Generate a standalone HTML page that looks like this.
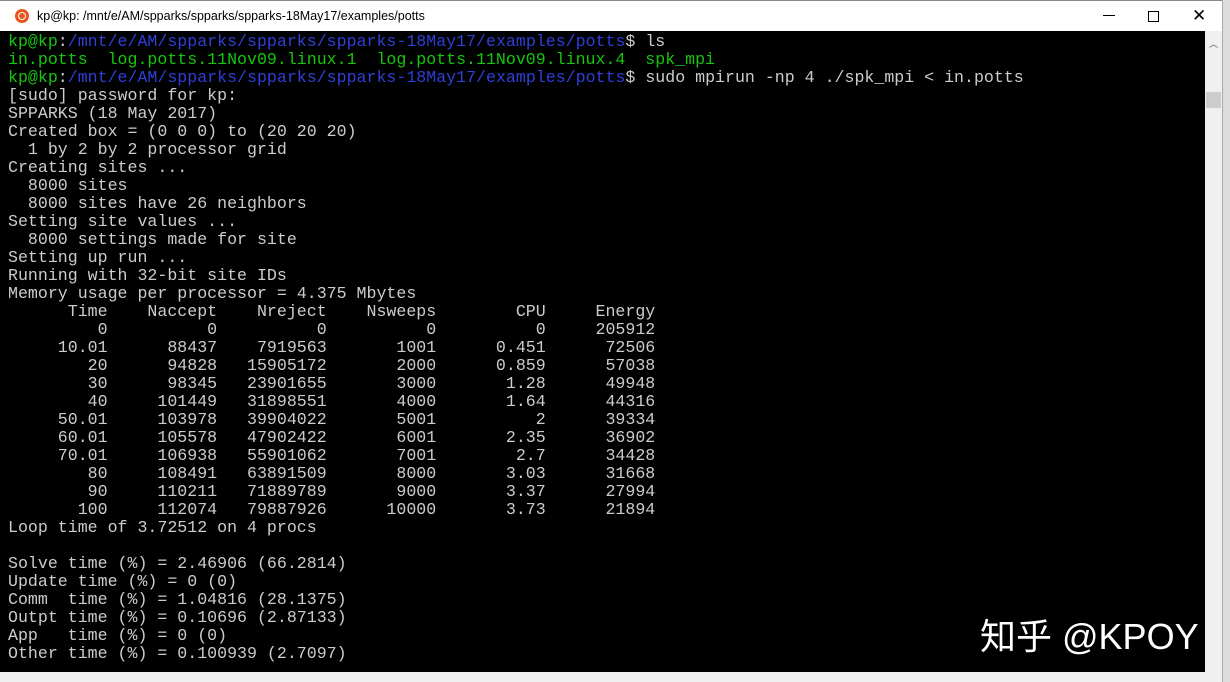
<!DOCTYPE html>
<html><head><meta charset="utf-8"><style>
body{margin:0;width:1230px;height:682px;overflow:hidden;background:#f0f0f0;position:relative;font-family:"Liberation Sans",sans-serif}
#title{position:absolute;left:0;top:0;width:1222px;height:31px;background:#fff;border-top:1px solid #888;box-sizing:border-box}
#title .t{position:absolute;left:37px;top:8px;font-size:12.5px;color:#000}
#title .ic{position:absolute;left:15px;top:8px;width:14px;height:14px;border-radius:50%;background:#e95420}
#title .ic:after{content:"";position:absolute;left:3px;top:3px;width:6px;height:6px;border:1px solid #fff;border-radius:50%}
.min{position:absolute;left:1103px;top:14px;width:12px;height:1px;background:#000}
.max{position:absolute;left:1148px;top:10px;width:9px;height:9px;border:1px solid #000}
.x{position:absolute;left:1192px;top:5px;font-size:17px;color:#000}
#term{position:absolute;left:0;top:31px;width:1205px;height:641px;background:#000}
pre{margin:0;position:absolute;left:8px;top:2px;font-family:"Liberation Mono",monospace;font-size:16.6px;line-height:18px;color:#cccccc}
.g{color:#16c60c}.b{color:#2f3fd8}
#sb{position:absolute;left:1205px;top:31px;width:17px;height:651px;background:#f0f0f0}
#sb .th{position:absolute;left:1px;top:61px;width:15px;height:16px;background:#cdcdcd}
#sb .up{position:absolute;left:4px;top:6px;font-size:9px;color:#555}
#edge{position:absolute;left:1222px;top:0;width:8px;height:682px;background:#dcdcdc;border-left:1px solid #aaa}
#wm{position:absolute;left:980px;top:608px;color:#fff;font-size:36px;font-family:"Liberation Sans","Noto Sans CJK SC",sans-serif}
</style></head><body>
<div id="title"><div class="ic"></div><div class="t">kp@kp: /mnt/e/AM/spparks/spparks/spparks-18May17/examples/potts</div><div class="min"></div><div class="max"></div><div class="x">✕</div></div>
<div id="term"><pre><span class="g">kp@kp</span>:<span class="b">/mnt/e/AM/spparks/spparks/spparks-18May17/examples/potts</span>$ ls
<span class="g">in.potts  log.potts.11Nov09.linux.1  log.potts.11Nov09.linux.4  spk_mpi</span>
<span class="g">kp@kp</span>:<span class="b">/mnt/e/AM/spparks/spparks/spparks-18May17/examples/potts</span>$ sudo mpirun -np 4 ./spk_mpi &lt; in.potts
[sudo] password for kp:
SPPARKS (18 May 2017)
Created box = (0 0 0) to (20 20 20)
  1 by 2 by 2 processor grid
Creating sites ...
  8000 sites
  8000 sites have 26 neighbors
Setting site values ...
  8000 settings made for site
Setting up run ...
Running with 32-bit site IDs
Memory usage per processor = 4.375 Mbytes
      Time    Naccept    Nreject    Nsweeps        CPU     Energy
         0          0          0          0          0     205912
     10.01      88437    7919563       1001      0.451      72506
        20      94828   15905172       2000      0.859      57038
        30      98345   23901655       3000       1.28      49948
        40     101449   31898551       4000       1.64      44316
     50.01     103978   39904022       5001          2      39334
     60.01     105578   47902422       6001       2.35      36902
     70.01     106938   55901062       7001        2.7      34428
        80     108491   63891509       8000       3.03      31668
        90     110211   71889789       9000       3.37      27994
       100     112074   79887926      10000       3.73      21894
Loop time of 3.72512 on 4 procs

Solve time (%) = 2.46906 (66.2814)
Update time (%) = 0 (0)
Comm  time (%) = 1.04816 (28.1375)
Outpt time (%) = 0.10696 (2.87133)
App   time (%) = 0 (0)
Other time (%) = 0.100939 (2.7097)</pre></div>
<div id="sb"><div class="up">︿</div><div class="th"></div></div>
<div id="edge"></div>
<div id="wm">知乎 @KPOY</div>
</body></html>
